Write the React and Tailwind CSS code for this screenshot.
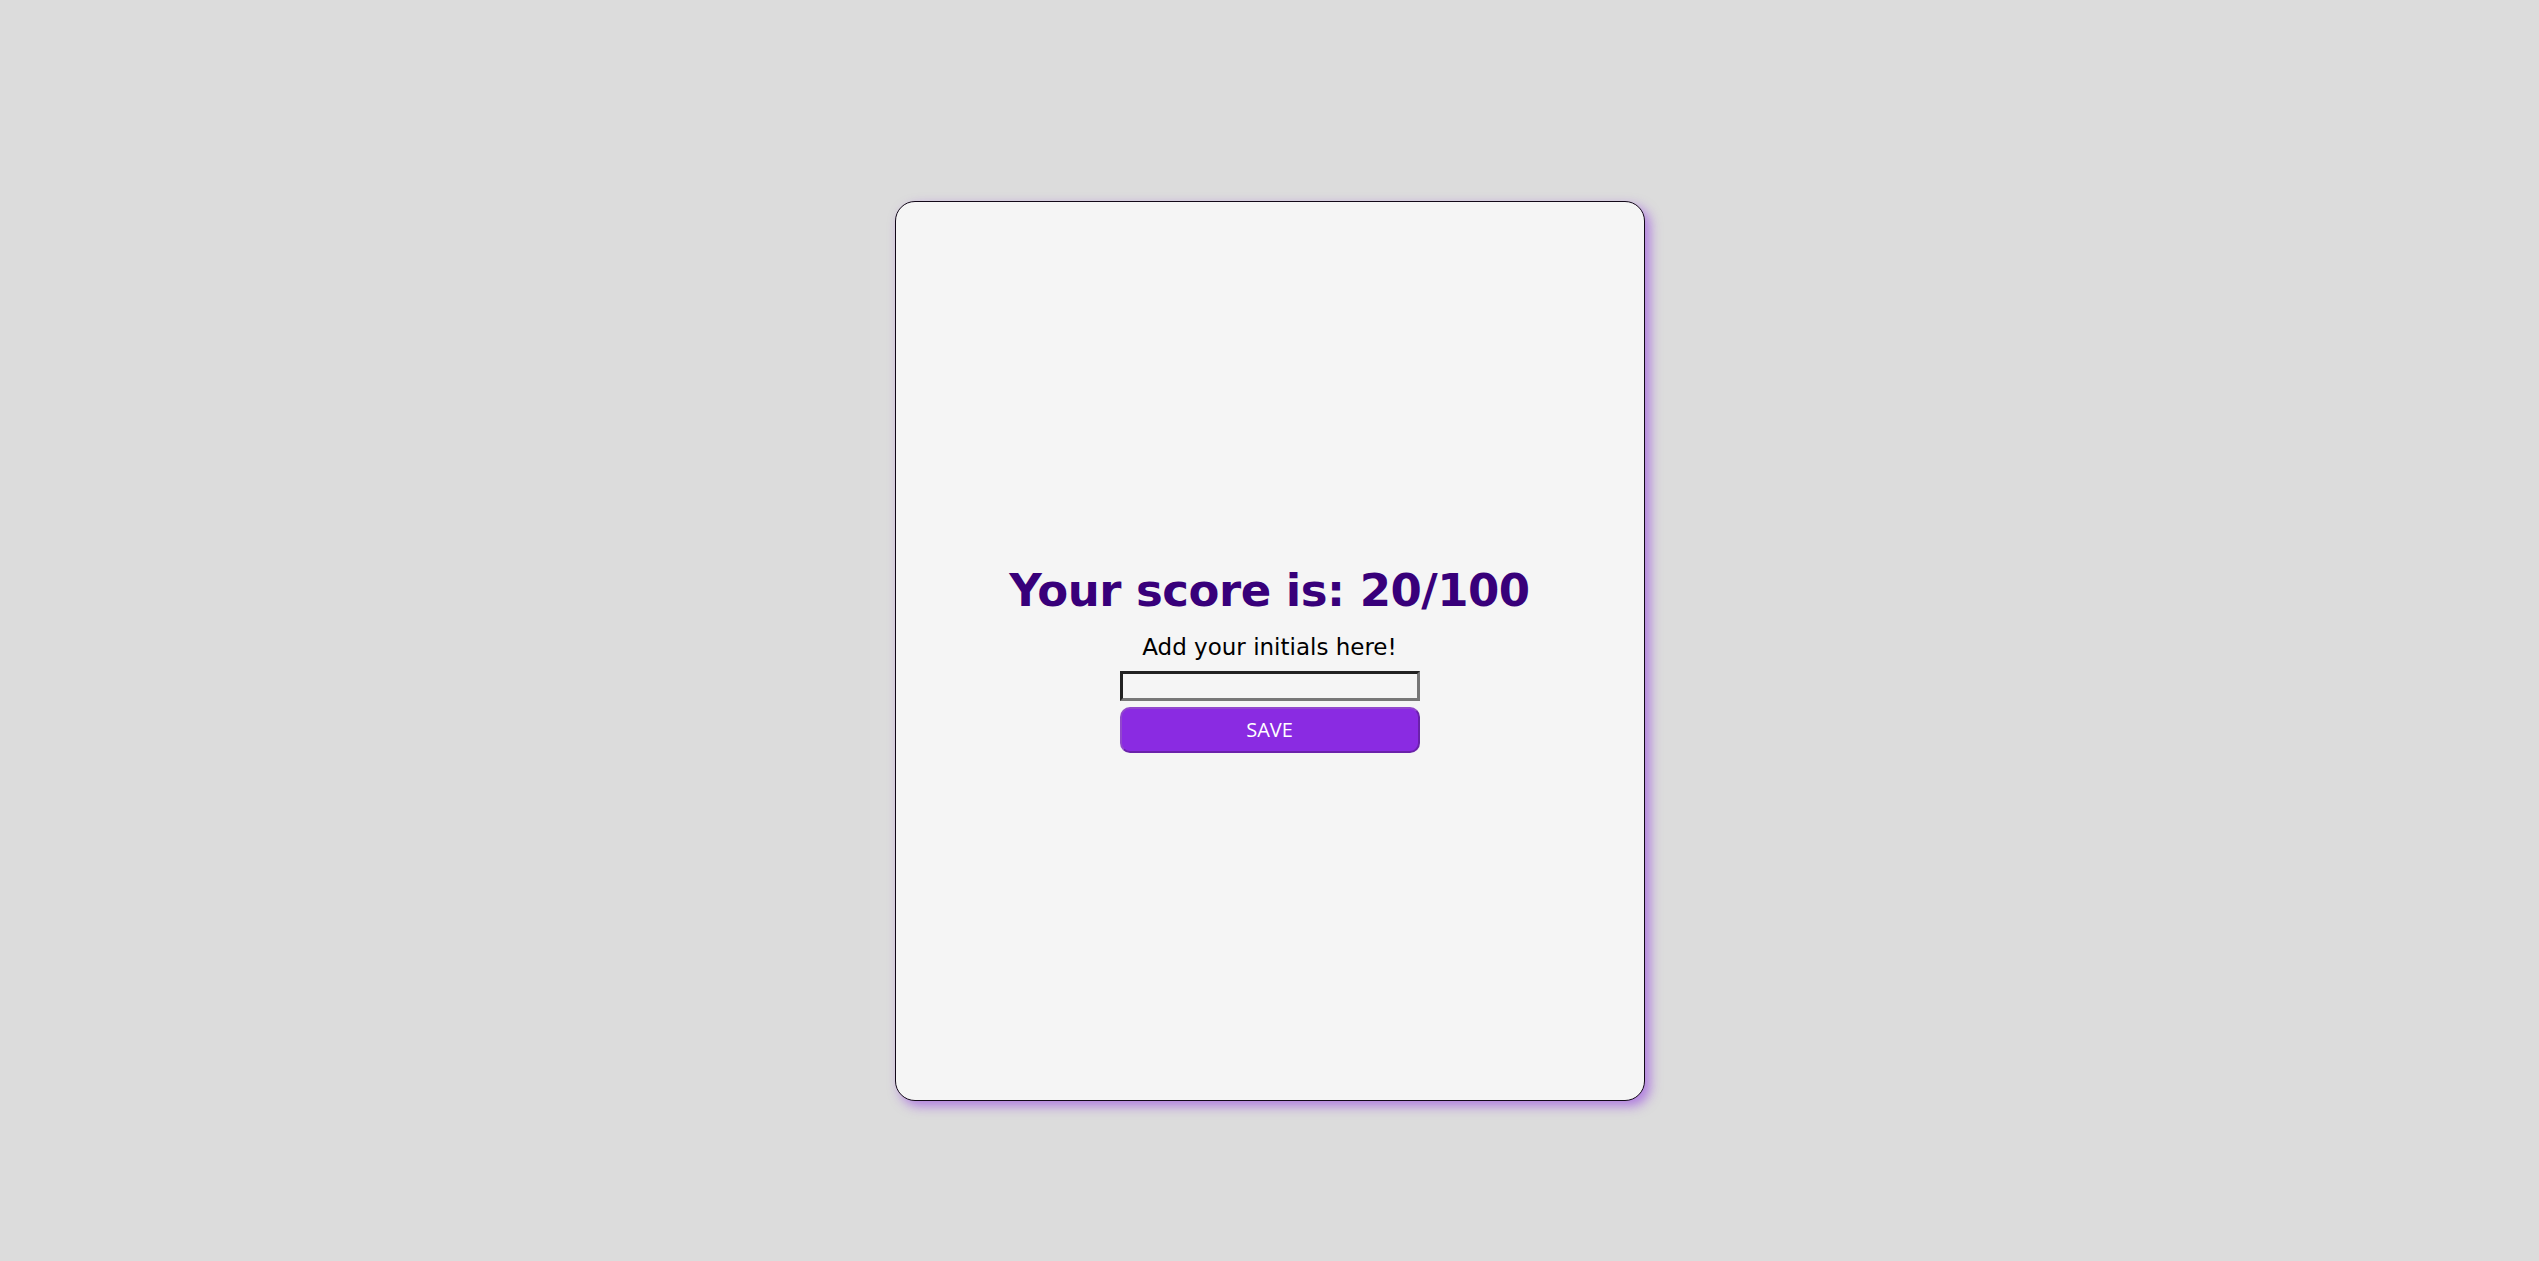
import React, { useState } from 'react';

export default function App() {
  const [initials, setInitials] = useState('');

  return (
    <div className="min-h-screen w-full bg-[#dcdcdc] pt-[201px] font-['DejaVu_Sans',sans-serif]">
      {/* Score card */}
      <div className="mx-auto flex h-[900px] w-[750px] flex-col items-center justify-center rounded-[20px] border border-[#120818] bg-[#f5f5f5] pt-[19px] shadow-[5px_5px_12px_rgba(138,43,226,0.55)]">
        <h1 className="text-[45px] font-bold leading-none tracking-[-0.5px] text-[#38007a]">
          Your score is: 20/100
        </h1>
        <p className="mt-[23px] text-[23px] leading-none text-black">Add your initials here!</p>
        <input
          type="text"
          value={initials}
          onChange={(e) => setInitials(e.target.value)}
          className="mt-[12px] h-[30px] w-[300px] border-[3px] border-t-[#222] border-l-[#222] border-b-[#777] border-r-[#777] bg-transparent px-1 outline-none"
        />
        <button className="mt-[6px] h-[46px] w-[300px] rounded-[10px] border-2 border-t-[#9147cc] border-l-[#9147cc] border-b-[#6a22aa] border-r-[#6a22aa] bg-[#8a2be2] font-['Open_Sans',sans-serif] text-[20px] text-white">
          SAVE
        </button>
      </div>
    </div>
  );
}
